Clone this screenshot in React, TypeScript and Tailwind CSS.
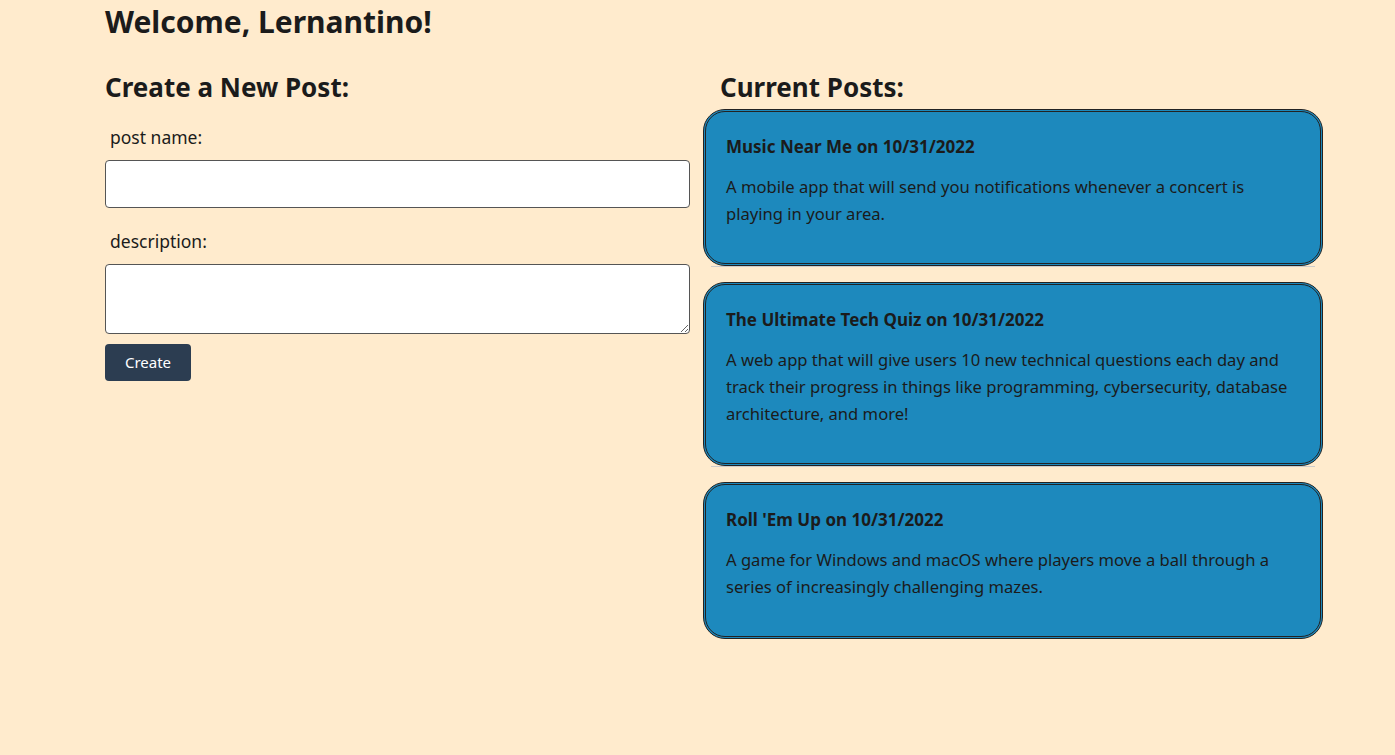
import React from 'react';

const posts = [
  {
    title: 'Music Near Me',
    date: '10/31/2022',
    body: 'A mobile app that will send you notifications whenever a concert is playing in your area.',
  },
  {
    title: 'The Ultimate Tech Quiz',
    date: '10/31/2022',
    body: 'A web app that will give users 10 new technical questions each day and track their progress in things like programming, cybersecurity, database architecture, and more!',
  },
  {
    title: "Roll 'Em Up",
    date: '10/31/2022',
    body: 'A game for Windows and macOS where players move a ball through a series of increasingly challenging mazes.',
  },
];

const font = { fontFamily: '"Noto Sans", "Open Sans", sans-serif' };

export default function App() {
  return (
    <div className="min-h-screen w-full bg-[#ffebcd] text-[#1b1b1b]" style={font}>
      <div className="pl-[105px]">
        <h1 className="pt-[2px] text-[30px] font-bold leading-[40px]">Welcome, Lernantino!</h1>

        <div className="mt-[27px] flex items-start">
          {/* new post form */}
          <div className="w-[585px]">
            <h2 className="text-[26px] font-bold leading-[36px]">Create a New Post:</h2>
            <form className="mt-[19px] flex flex-col">
              <label className="pl-[5px] text-[17.5px] leading-[26px]">post name:</label>
              <input
                type="text"
                className="mt-[10px] h-[48px] w-full rounded-[4px] border border-[#555] bg-white"
              />
              <label className="mt-[20px] pl-[5px] text-[17.5px] leading-[26px]">description:</label>
              <textarea className="mt-[10px] h-[70px] w-full rounded-[4px] border border-[#555] bg-white" />
              <div>
                <button
                  type="button"
                  className="mt-[10px] h-[37px] w-[86px] rounded-[4px] bg-[#2c3d51] text-[15px] text-white"
                >
                  Create
                </button>
              </div>
            </form>
          </div>

          {/* current posts */}
          <div className="ml-[13px] w-[620px]">
            <h2 className="pl-[17px] text-[26px] font-bold leading-[36px]">Current Posts:</h2>
            <div className="mt-[4px] flex flex-col">
              {posts.map((p, i) => (
                <div key={p.title} className={i > 0 ? 'mt-[15px]' : ''}>
                  <div className="rounded-[22px] border-[3px] border-double border-[#222] bg-[#1d89bd] px-[20px] pb-[36px] pt-[22px]">
                    <h3 className="text-[17px] font-bold leading-[26px]">
                      {p.title} on {p.date}
                    </h3>
                    <p className="mt-[13px] text-[16.6px] leading-[27px]">{p.body}</p>
                  </div>
                  {i < posts.length - 1 && <hr className="mx-[8px] border-t border-[#ccc]" />}
                </div>
              ))}
            </div>
          </div>
        </div>
      </div>
    </div>
  );
}
